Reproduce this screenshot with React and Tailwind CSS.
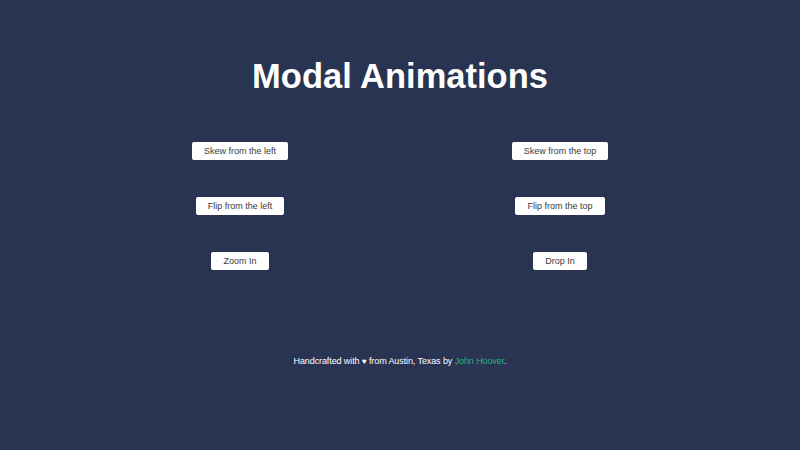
import React from 'react';

const left = ['Skew from the left', 'Flip from the left', 'Zoom In'];
const right = ['Skew from the top', 'Flip from the top', 'Drop In'];

const Trigger = ({ label }) => (
  <button className="bg-white text-[#3a3a3a] text-[9px] leading-[14px] px-[12px] py-[2px] rounded-[2px]">
    {label}
  </button>
);

const App = () => {
  return (
    <div className="min-h-screen bg-[#283452] font-['Liberation_Sans',Arial,sans-serif] flex flex-col items-center">
      <h1 className="mt-[53px] text-white text-[34.5px] font-bold leading-[46px]">Modal Animations</h1>

      <div className="mt-[43px] w-[640px] grid grid-cols-2">
        {[left, right].map((col, i) => (
          <div key={i} className="flex flex-col items-center gap-[37px]">
            {col.map(label => (
              <Trigger key={label} label={label} />
            ))}
          </div>
        ))}
      </div>

      <p className="mt-[85px] text-white text-[9px] tracking-[-0.1px] leading-[12px]">
        Handcrafted with <span className="text-[8px]">♥</span> from Austin, Texas by{' '}
        <a href="#" className="text-[#2ab27b]">John Hoover</a>.
      </p>
    </div>
  );
};

export default App;
